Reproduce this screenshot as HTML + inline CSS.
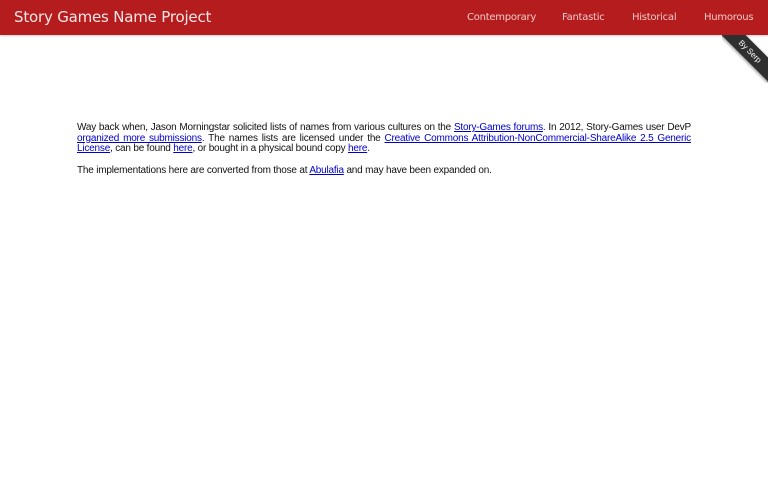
<!DOCTYPE html>
<html><head><meta charset="utf-8"><style>
body{margin:0;width:768px;height:480px;background:#fff;overflow:hidden;position:relative;font-family:"Liberation Sans",sans-serif}
.hd{position:absolute;left:0;top:0;width:768px;height:35px;background:#b41c1e;box-shadow:0 1px 2px rgba(0,0,0,.2)}
.t{position:absolute;left:14px;top:8px;color:#fbe6e6;font-family:"DejaVu Sans","Liberation Sans",sans-serif;font-size:15px;letter-spacing:-0.2px}
.n{position:absolute;top:12px;color:#f5caca;font-family:"DejaVu Sans","Liberation Sans",sans-serif;font-size:10px;letter-spacing:-0.25px}
.rb{position:absolute;right:0;top:35px;width:46px;height:48px;overflow:hidden}
.rb div{position:absolute;left:-22px;top:8px;width:100px;height:17px;background:#2f2f2f;color:#fff;font-size:8px;line-height:17px;text-align:center;transform:rotate(45deg);box-shadow:0 1px 3px rgba(0,0,0,.5)}
.c{position:absolute;left:77px;top:123px;width:614px;font-size:10px;line-height:10.6px;color:#111;text-align:justify;letter-spacing:-0.2px}
.c p{margin:0 0 11px}
a{color:#00c;text-decoration:underline}
</style></head><body>
<div class="hd">
<div class="t">Story Games Name Project</div>
<div class="n" style="left:467px">Contemporary</div>
<div class="n" style="left:562px">Fantastic</div>
<div class="n" style="left:632px">Historical</div>
<div class="n" style="left:704px">Humorous</div>
</div>
<div class="rb"><div>By Serp</div></div>
<div class="c">
<p>Way back when, Jason Morningstar solicited lists of names from various cultures on the <a>Story-Games forums</a>. In 2012, Story-Games user DevP <a>organized more submissions</a>. The names lists are licensed under the <a>Creative Commons Attribution-NonCommercial-ShareAlike 2.5 Generic License</a>, can be found <a>here</a>, or bought in a physical bound copy <a>here</a>.</p>
<p>The implementations here are converted from those at <a>Abulafia</a> and may have been expanded on.</p>
</div>
</body></html>
